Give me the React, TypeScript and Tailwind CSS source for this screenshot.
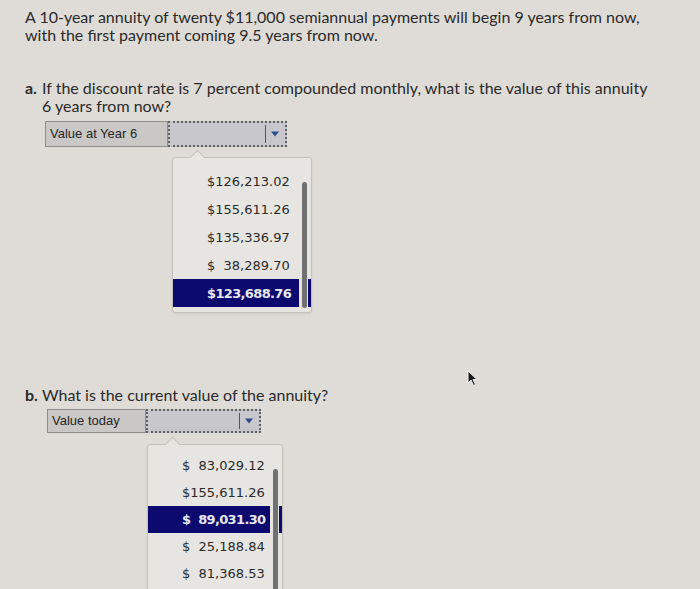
import React from "react";

type PopupProps = {
  items: string[];
  selected: number;
  width: number;
  height: number;
  padTop: number;
  itemH: number;
  textLeft: number;
  caretLeft: number;
  thumbTop: number;
  thumbBottom: number;
};

function Popup({ items, selected, width, height, padTop, itemH, textLeft, caretLeft, thumbTop, thumbBottom }: PopupProps) {
  return (
    <div
      className="relative border border-[#c4c1bc] bg-[#e7e5e1] rounded-[3px] shadow-[0_1px_2px_rgba(0,0,0,0.08)]"
      style={{ width, height }}
    >
      {/* caret */}
      <div
        className="absolute top-[-6px] w-[11px] h-[11px] rotate-45 border-l border-t border-[#c4c1bc] bg-[#e7e5e1]"
        style={{ left: caretLeft }}
      />
      <div className="relative" style={{ paddingTop: padTop }}>
        {items.map((t, i) => (
          <div
            key={i}
            className={
              i === selected
                ? "flex items-center bg-[#0d0a6f] text-[#e8e8f4]"
                : "flex items-center text-[#2a2a2a]"
            }
            style={{ height: itemH, paddingLeft: textLeft }}
          >
            <span
              className={
                i === selected
                  ? "whitespace-pre font-['DejaVu_Sans',sans-serif] text-[13px] leading-none font-bold tracking-[-0.65px]"
                  : "whitespace-pre font-['DejaVu_Sans',sans-serif] text-[13px] leading-none"
              }
            >
              {t}
            </span>
          </div>
        ))}
      </div>
      {/* scrollbar track + thumb */}
      <div className="absolute right-[3px] top-0 bottom-0 w-[9px] bg-[#e7e5e1]">
        <div
          className="absolute left-[3px] w-[5px] rounded-full bg-[#717171]"
          style={{ top: thumbTop, bottom: thumbBottom }}
        />
      </div>
    </div>
  );
}

function SelectRow({ label, labelW, selW, lineFromRight, h }: { label: string; labelW: number; selW: number; lineFromRight: number; h: number }) {
  return (
    <div className="flex items-stretch" style={{ height: h }}>
      <div
        className="flex items-center border border-[#8f8e8d] bg-[#c9c8c6] pl-[4px] text-[13px] text-[#262626] font-['Liberation_Sans',Arial,sans-serif]"
        style={{ width: labelW }}
      >
        {label}
      </div>
      <div
        className="relative border-2 border-dotted border-[#5e5e66] bg-[#c8c8cc]"
        style={{ width: selW }}
      >
        <div
          className="absolute top-[2px] bottom-[2px] w-px bg-[#55555c]"
          style={{ right: lineFromRight }}
        />
        <div
          className="absolute top-1/2 -translate-y-1/2 w-0 h-0 border-l-[4px] border-r-[4px] border-t-[5px] border-l-transparent border-r-transparent border-t-[#2e4c8c]"
          style={{ right: 6 }}
        />
      </div>
    </div>
  );
}

export default function App() {
  return (
    <div className="relative w-[700px] h-[589px] overflow-hidden bg-[#dfdcd7] pl-[25px] pt-[8px] font-['Lato',sans-serif] text-[#2a2a2a]">
      <p className="text-[16px] leading-[18px]">
        A 10-year annuity of twenty $11,000 semiannual payments will begin 9 years from now,
        <br />
        with the first payment coming 9.5 years from now.
      </p>

      <div className="mt-[35px] flex text-[16px] leading-[18px]">
        <span className="w-[17px] shrink-0 font-bold">a.</span>
        <span>
          If the discount rate is 7 percent compounded monthly, what is the value of this annuity
          <br />
          6 years from now?
        </span>
      </div>

      <div className="mt-[6px] ml-[20px]">
        <SelectRow label="Value at Year 6" labelW={123} selW={119} lineFromRight={19} h={26} />
      </div>

      <div className="mt-[10px] ml-[147px]">
        <Popup
          items={["$126,213.02", "$155,611.26", "$135,336.97", "$  38,289.70", "$123,688.76"]}
          selected={4}
          width={140}
          height={156}
          padTop={9}
          itemH={28}
          textLeft={34}
          caretLeft={19}
          thumbTop={24}
          thumbBottom={4}
        />
      </div>

      <div className="mt-[73px] flex text-[16px] leading-[18px]">
        <span className="w-[17px] shrink-0 font-bold">b.</span>
        <span>What is the current value of the annuity?</span>
      </div>

      <div className="mt-[5px] ml-[22px]">
        <SelectRow label="Value today" labelW={99} selW={115} lineFromRight={19} h={24} />
      </div>

      <div className="mt-[11px] ml-[122px]">
        <Popup
          items={["$  83,029.12", "$155,611.26", "$  89,031.30", "$  25,188.84", "$  81,368.53"]}
          selected={2}
          width={136}
          height={160}
          padTop={7}
          itemH={27}
          textLeft={34}
          caretLeft={19}
          thumbTop={24}
          thumbBottom={-10}
        />
      </div>

      {/* mouse cursor */}
      <svg className="absolute left-[467px] top-[370px]" width="12" height="17" viewBox="0 0 12 17">
        <path d="M1 1 L1 13 L4 10 L6.5 15.5 L8.5 14.5 L6 9.5 L10 9.5 Z" fill="#1a1a1a" stroke="#f2f2f2" strokeWidth="1" />
      </svg>
    </div>
  );
}
